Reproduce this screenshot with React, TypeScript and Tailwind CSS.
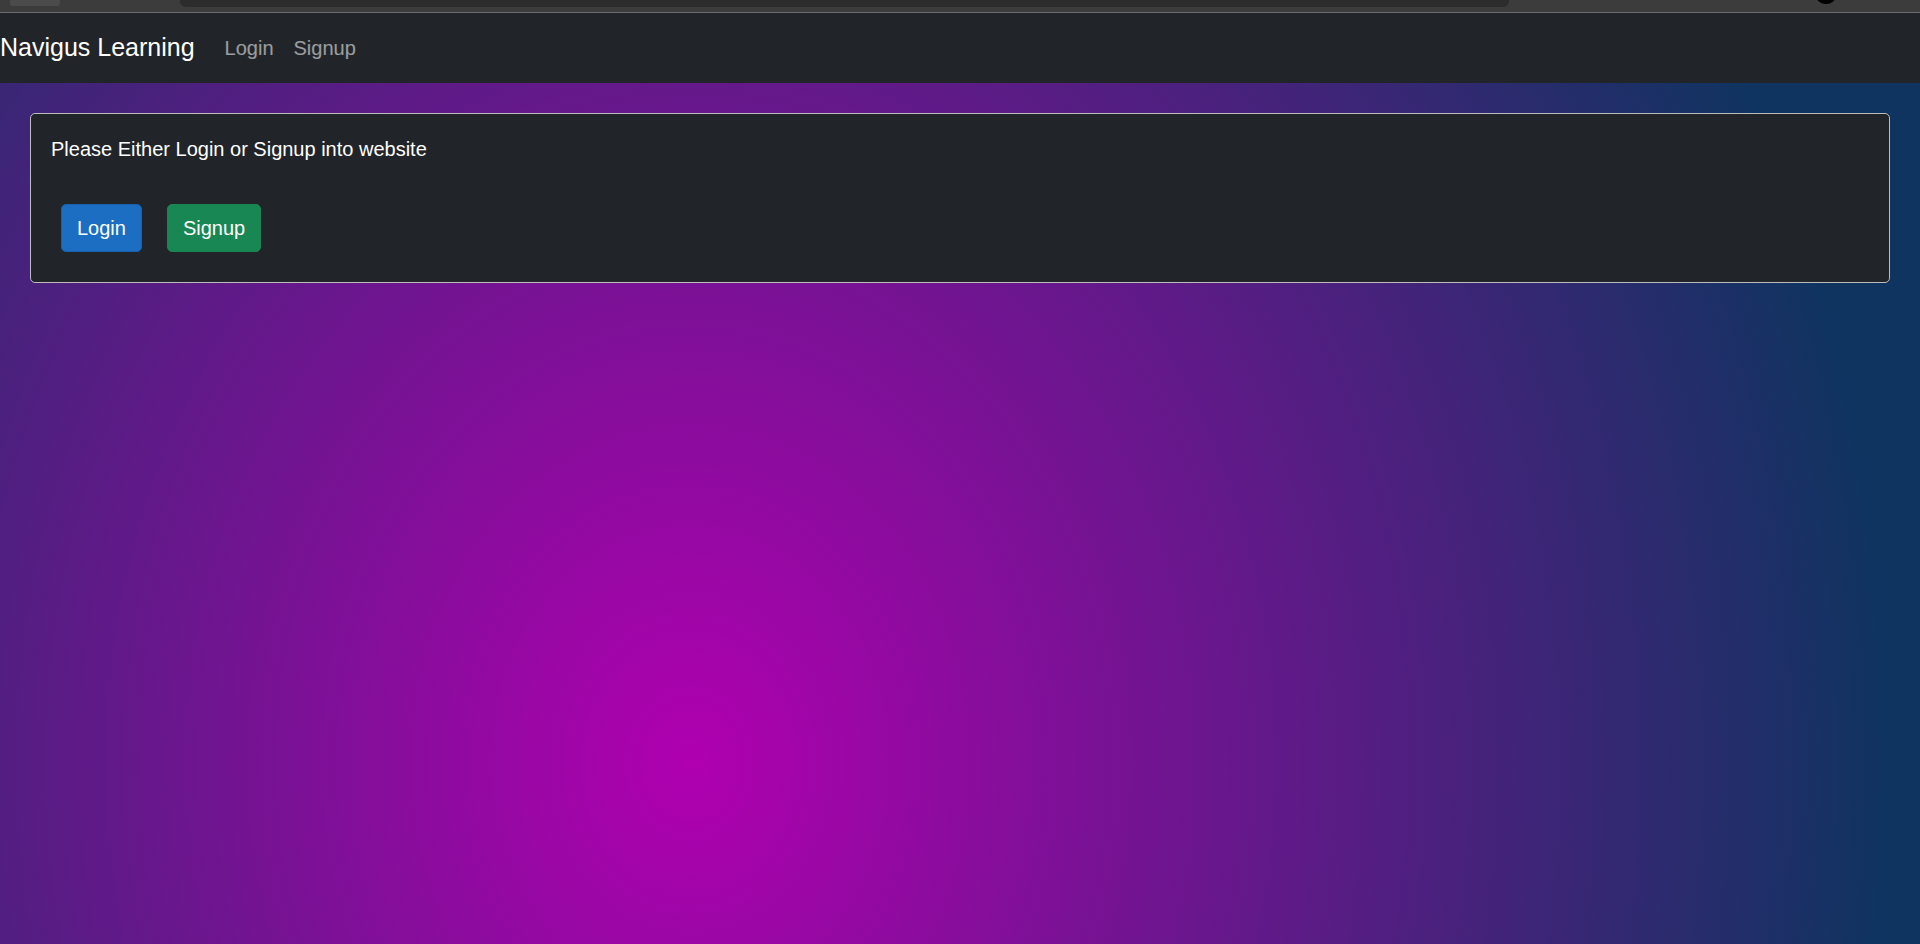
import React from "react";

export default function App() {
  return (
    <div className="flex h-[944px] w-full flex-col overflow-hidden font-['Liberation_Sans',Arial,sans-serif]">
      {/* browser chrome strip */}
      <div className="flex h-[13px] shrink-0 items-start border-b border-[#6b6b6b] bg-[#3c3c3c]">
        <div className="ml-[10px] h-[6px] w-[50px] rounded-b-[3px] bg-[#4b4b4b]" />
        <div className="ml-[120px] h-[7px] w-[1329px] rounded-b-[6px] bg-[#2c2c2c]" />
        <div className="ml-[307px] -mt-[14px] h-[18px] w-[20px] rounded-full bg-black" />
      </div>

      {/* navbar */}
      <nav className="flex h-[70px] shrink-0 items-center bg-[#212529]">
        <span className="mr-[20px] text-[25px] leading-[37.5px] text-white">Navigus Learning</span>
        <a className="px-[10px] text-[20px] leading-[30px] text-white/55">Login</a>
        <a className="px-[10px] text-[20px] leading-[30px] text-white/55">Signup</a>
      </nav>

      {/* main */}
      <main className="flex-1 bg-[radial-gradient(ellipse_1200px_1450px_at_690px_680px,#b000b0_0%,#0f3460_100%)] p-[30px]">
        <div className="rounded-[5px] border border-[#bdbdbd] bg-[#212529] p-[20px]">
          <p className="text-[20px] leading-[30px] text-white">Please Either Login or Signup into website</p>
          <div className="mt-[40px] flex gap-[25px] px-[10px] pb-[10px]">
            <button className="h-[48px] rounded-[5px] border border-[#1861ac] bg-[#1b6ec2] px-[15px] text-[20px] leading-[30px] text-white">
              Login
            </button>
            <button className="h-[48px] rounded-[5px] border border-[#198754] bg-[#198754] px-[15px] text-[20px] leading-[30px] text-white">
              Signup
            </button>
          </div>
        </div>
      </main>
    </div>
  );
}
